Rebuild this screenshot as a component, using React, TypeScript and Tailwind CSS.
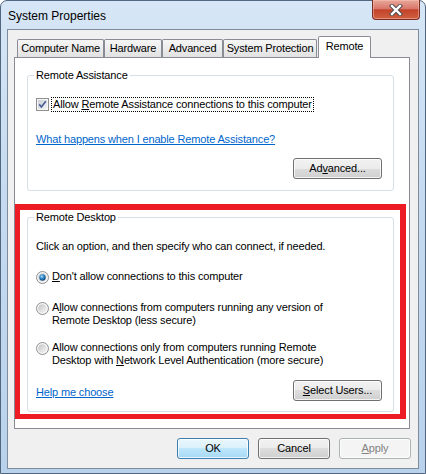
import { useId, type ReactNode } from "react"

type BtnKind = "normal" | "default" | "disabled"

const btnLook: Record<BtnKind, string> = {
	normal:
		"border-[#707070] bg-[linear-gradient(to_bottom,#f2f2f2_0%,#ebebeb_50%,#dddddd_50%,#cfcfcf_100%)] text-black",
	default:
		"border-[#3c7fb1] bg-[linear-gradient(to_bottom,#eaf6fd_0%,#d9f0fc_50%,#bee6fd_50%,#a7d9f5_100%)] text-black",
	disabled: "border-[#adb2b5] bg-[#f4f4f4] text-[#838383]",
}

function Btn({
	children,
	kind = "normal",
	className = "",
}: {
	children: ReactNode
	kind?: BtnKind
	className?: string
}) {
	return (
		<div
			className={`flex h-[21px] items-center justify-center rounded-[3px] border shadow-[inset_0_0_0_1px_rgba(255,255,255,0.75)] ${btnLook[kind]} ${className}`}
		>
			{children}
		</div>
	)
}

function CheckBox() {
	const id = useId()
	return (
		<svg width="13" height="13" viewBox="0 0 13 13" className="shrink-0">
			<defs>
				<linearGradient id={id} x1="0" y1="0" x2="1" y2="1">
					<stop offset="0" stopColor="#cbcfd5" />
					<stop offset="1" stopColor="#f4f4f4" />
				</linearGradient>
			</defs>
			<rect x="0.5" y="0.5" width="12" height="12" fill="#f6f6f6" stroke="#8f8f8f" />
			<rect x="2" y="2" width="9" height="9" fill={`url(#${id})`} />
			<path d="M3.2 6.4 L5.4 9 L9.8 3.2" fill="none" stroke="#4a5f97" strokeWidth="1.7" />
		</svg>
	)
}

function Radio({ checked = false }: { checked?: boolean }) {
	const ring = useId()
	const dot = useId()
	return (
		<svg width="13" height="13" viewBox="0 0 13 13" className="mt-[1px] shrink-0">
			<defs>
				<linearGradient id={ring} x1="0" y1="0" x2="1" y2="1">
					<stop offset="0" stopColor="#c4c4c4" />
					<stop offset="1" stopColor="#f7f7f7" />
				</linearGradient>
				<radialGradient id={dot} cx="0.4" cy="0.35" r="0.7">
					<stop offset="0" stopColor="#b6e2fa" />
					<stop offset="0.45" stopColor="#2f86c8" />
					<stop offset="1" stopColor="#0d3f6b" />
				</radialGradient>
			</defs>
			<circle cx="6.5" cy="6.5" r="6" fill="#f4f4f4" stroke="#8f8f8f" />
			<circle cx="6.5" cy="6.5" r="4.3" fill={`url(#${ring})`} />
			{checked && <circle cx="6.5" cy="6.5" r="3.2" fill={`url(#${dot})`} />}
		</svg>
	)
}

function GroupBox({ title, children }: { title: string; children: ReactNode }) {
	return (
		<fieldset className="w-[367px] rounded-[3px] border border-[#d5dfe5]">
			<legend className="ml-[6px] px-[2px] leading-[13px]">{title}</legend>
			{children}
		</fieldset>
	)
}

function Option({ checked, children }: { checked?: boolean; children: ReactNode }) {
	return (
		<div className="flex items-start gap-[3px]">
			<Radio checked={checked} />
			<span className="leading-[13px]">{children}</span>
		</div>
	)
}

const tabs = [
	{ label: "Computer Name", width: "w-[87px]" },
	{ label: "Hardware", width: "w-[58px]" },
	{ label: "Advanced", width: "w-[61px]" },
	{ label: "System Protection", width: "w-[94px]" },
]

export default function App() {
	return (
		<div className="h-[474px] w-[426px] overflow-hidden font-['Liberation_Sans',Arial,sans-serif] text-[11px] leading-[13px] tracking-[-0.15px] text-black">
			<div className="flex h-full flex-col rounded-t-[7px] border border-[#51667f] bg-[linear-gradient(to_bottom,#d6e6f6_0%,#c6dbf1_40%,#b9d2ec_100%)]">
				{/* title bar */}
				<div className="flex h-[28px] shrink-0 items-start justify-between">
					<span className="pl-[7px] pt-[8px] text-[12px] leading-[14px] tracking-normal">System Properties</span>
					<div className="-mt-[1px] mr-[5px] flex h-[20px] w-[48px] items-center justify-center rounded-b-[4px] border border-t-0 border-[#7a2f26] bg-[linear-gradient(to_bottom,#e8a899_0%,#d9786a_45%,#c2432b_52%,#d0603f_100%)] shadow-[inset_0_0_0_1px_rgba(255,200,190,0.45)]">
						<svg width="14" height="12" viewBox="0 0 14 12">
							<path d="M3 2 L11 10 M11 2 L3 10" stroke="#4a4a4a" strokeWidth="4.2" strokeLinecap="square" />
							<path d="M3 2 L11 10 M11 2 L3 10" stroke="#ffffff" strokeWidth="2.4" strokeLinecap="square" />
						</svg>
					</div>
				</div>

				{/* client area */}
				<div className="ml-[6px] flex h-[440px] w-[412px] shrink-0 flex-col border border-[#7f8c9b] bg-[#f0f0f0]">
					{/* tab strip */}
					<div className="mt-[6px] flex h-[21px] items-end pl-[9px]">
						{tabs.map((t) => (
							<div
								key={t.label}
								className={`flex h-[18px] items-center justify-center rounded-t-[2px] border border-b-0 border-[#898c95] bg-linear-to-b from-[#f6f6f6] to-[#e2e2e2] ${t.width}`}
							>
								{t.label}
							</div>
						))}
						<div className="relative z-10 -mb-[1px] ml-[1px] flex h-[22px] w-[53px] items-center justify-center rounded-t-[2px] border border-b-0 border-[#898c95] bg-white pb-[3px]">
							Remote
						</div>
					</div>

					{/* tab page */}
					<div className="ml-[6px] w-[396px] border border-[#898c95] bg-white pb-[9px]">
						<div className="ml-[12px] mt-[11px]">
							<GroupBox title="Remote Assistance">
								<div className="pb-[11px] pl-[8px] pr-[11px] pt-[15px]">
									<div className="flex items-center gap-[2px]">
										<CheckBox />
										<span className="border border-dotted border-black px-[1px] leading-[13px]">
											Allow <span className="underline underline-offset-[1px]">R</span>emote Assistance connections to this computer
										</span>
									</div>
									<div className="mt-[21px]">
										<span className="text-[#0066cc] underline underline-offset-[1px]">
											What happens when I enable Remote Assistance?
										</span>
									</div>
									<div className="mt-[12px] flex justify-end">
										<Btn className="w-[89px]">
											<span>
												Ad<span className="underline underline-offset-[1px]">v</span>anced...
											</span>
										</Btn>
									</div>
								</div>
							</GroupBox>
						</div>

						{/* highlighted remote desktop section */}
						<div className="mt-[13px] w-[391px] border-[#ed1c24] border-b-[5px] border-l-[5px] border-r-[6px] border-t-[6px]">
							<div className="mb-[2px] ml-[7px] mt-[1px]">
								<GroupBox title="Remote Desktop">
									<div className="pb-[10px] pl-[8px] pr-[11px] pt-[16px]">
										<p>Click an option, and then specify who can connect, if needed.</p>
										<div className="mt-[17px]">
											<Option checked>
												<span className="underline underline-offset-[1px]">D</span>on't allow connections to this computer
											</Option>
										</div>
										<div className="mt-[17px]">
											<Option>
												A<span className="underline underline-offset-[1px]">l</span>low connections from computers running any version of
												<br />
												Remote Desktop (less secure)
											</Option>
										</div>
										<div className="mt-[14px]">
											<Option>
												Allow connections only from computers running Remote
												<br />
												Desktop with <span className="underline underline-offset-[1px]">N</span>etwork Level Authentication (more secure)
											</Option>
										</div>
										<div className="mt-[13px] flex items-center justify-between">
											<span className="pt-[3px] text-[#0066cc] underline underline-offset-[1px]">Help me choose</span>
											<Btn className="w-[89px]">
												<span>
													<span className="underline underline-offset-[1px]">S</span>elect Users...
												</span>
											</Btn>
										</div>
									</div>
								</GroupBox>
							</div>
						</div>
					</div>

					{/* dialog buttons */}
					<div className="mt-[9px] flex justify-end gap-[9px] pr-[7px]">
						<Btn kind="default" className="w-[72px]">
							OK
						</Btn>
						<Btn className="w-[72px]">Cancel</Btn>
						<Btn kind="disabled" className="w-[72px]">
							<span>
								<span className="underline underline-offset-[1px]">A</span>pply
							</span>
						</Btn>
					</div>
				</div>
			</div>
		</div>
	)
}
